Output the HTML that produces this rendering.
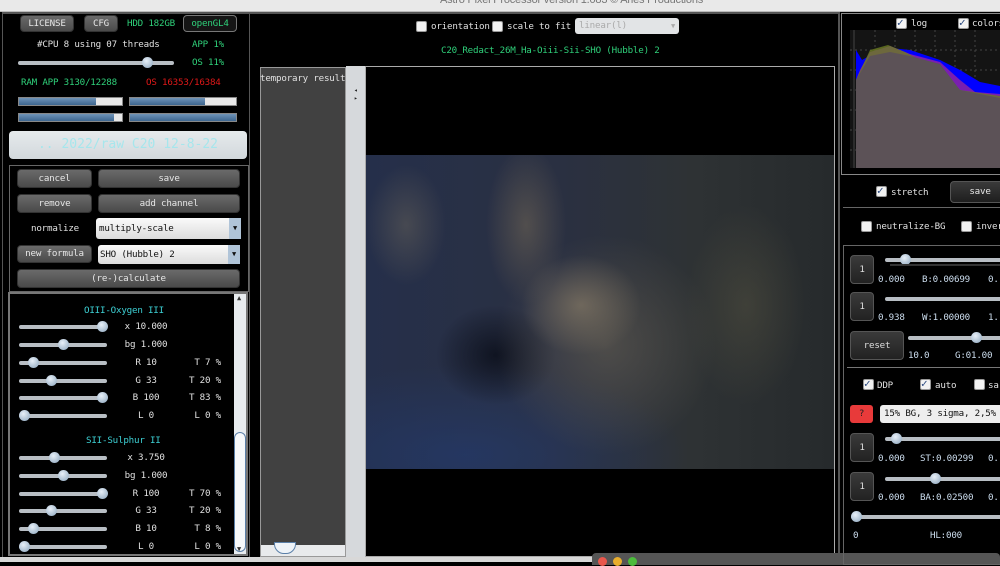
<!DOCTYPE html>
<html><head><meta charset="utf-8"><style>
*{margin:0;padding:0;box-sizing:border-box}
body{width:1000px;height:562px;background:#000;position:relative;overflow:hidden;font-family:"DejaVu Sans Mono","Liberation Mono",monospace;font-size:9.2px;letter-spacing:-0.2px;color:#ddd}
.a{position:absolute;white-space:nowrap}
.btn{position:absolute;background:linear-gradient(#6a6a6a,#4a4a4a);border-radius:4px;color:#e6e6e6;text-align:center;border:1px solid #333}
.g{color:#2fd07a}
.sl{position:absolute;height:4px;background:#b8bec4;border-radius:2px}
.kn{position:absolute;width:11px;height:11px;border-radius:50%;background:radial-gradient(circle at 40% 35%,#e8f0f8,#8aa4bc);top:-4px}
.bar{position:absolute;height:9px;background:#e8e8e8;border:1px solid #888}
.bar i{display:block;height:100%;background:linear-gradient(#6f93b8,#3d6690)}
.cb{position:absolute;width:11px;height:11px;background:#f2f2f2;border-radius:2px;border:1px solid #999}
.ck::after{content:"✓";position:absolute;left:0;top:-3px;font-size:11px;color:#2b4a80;font-weight:bold}
.t{color:#e0e0e0}
.one{position:absolute;width:24px;height:29px;background:linear-gradient(#3a3a3a,#222);border:1px solid #555;border-radius:4px;color:#ddd;text-align:center;line-height:27px}
</style></head><body>
<div class="a" style="left:0;top:0;width:1000px;height:12px;background:#e9e9e9;border-bottom:1px solid #bbb"></div>
<div class="a" style="left:440px;top:-6px;color:#777;font-family:'Liberation Sans',sans-serif;font-size:11px">Astro Pixel Processor version 1.083 © Aries Productions</div>
<div class="a" style="left:2px;top:12px;width:836px;height:2px;background:#555"></div>
<div class="a" style="left:2px;top:14px;width:248px;height:548px;border-left:1px solid #555;border-right:1px solid #555"></div>
<div class="btn" style="left:20px;top:15px;width:54px;height:17px;line-height:15px">LICENSE</div>
<div class="btn" style="left:84px;top:15px;width:34px;height:17px;line-height:15px">CFG</div>
<div class="a g" style="left:127px;top:18px">HDD 182GB</div>
<div class="btn" style="left:183px;top:15px;width:54px;height:17px;line-height:15px;background:#151515;border:1px solid #777;color:#2fd07a">openGL4</div>
<div class="a t" style="left:37px;top:39px">#CPU 8  using 07 threads</div>
<div class="a g" style="left:192px;top:39px">APP 1%</div>
<div class="sl" style="left:18px;top:61px;width:156px"><div class="kn" style="left:124px"></div></div>
<div class="a g" style="left:192px;top:57px">OS 11%</div>
<div class="a g" style="left:21px;top:77px">RAM  APP 3130/12288</div>
<div class="a" style="left:146px;top:77px;color:#e01818">OS 16353/16384</div>
<div class="bar" style="left:18px;top:97px;width:105px"><i style="width:75%"></i></div>
<div class="bar" style="left:129px;top:97px;width:108px"><i style="width:71%"></i></div>
<div class="bar" style="left:18px;top:113px;width:105px"><i style="width:92%"></i></div>
<div class="bar" style="left:129px;top:113px;width:108px"><i style="width:100%"></i></div>
<div class="a" style="left:9px;top:131px;width:238px;height:28px;background:linear-gradient(#e6eaec,#d2d8dc);border-radius:4px;color:#a6e6ec;font-size:13px;letter-spacing:0;text-align:center;line-height:28px">.. 2022/raw C20 12-8-22</div>
<div class="a" style="left:9px;top:165px;width:240px;height:127px;border:1px solid #666"></div>
<div class="btn" style="left:17px;top:169px;width:75px;height:19px;line-height:17px">cancel</div>
<div class="btn" style="left:98px;top:169px;width:142px;height:19px;line-height:17px">save</div>
<div class="btn" style="left:17px;top:194px;width:75px;height:19px;line-height:17px">remove</div>
<div class="btn" style="left:98px;top:194px;width:142px;height:19px;line-height:17px">add channel</div>
<div class="a t" style="left:31px;top:223px">normalize</div>
<div class="a" style="left:96px;top:218px;width:145px;height:21px;background:linear-gradient(#fafafa,#dcdcdc);border-radius:3px;color:#111;line-height:21px;padding-left:3px">multiply-scale<span style="position:absolute;right:0;top:0;width:12px;height:21px;background:#b0c4d8;text-align:center;font-size:7px">▼</span></div>
<div class="btn" style="left:17px;top:245px;width:75px;height:18px;line-height:16px">new formula</div>
<div class="a" style="left:98px;top:245px;width:142px;height:19px;background:linear-gradient(#fafafa,#dcdcdc);border-radius:3px;color:#111;line-height:19px;padding-left:2px">SHO (Hubble) 2<span style="position:absolute;right:0;top:0;width:12px;height:19px;background:#b0c4d8;text-align:center;font-size:7px">▼</span></div>
<div class="btn" style="left:17px;top:269px;width:223px;height:19px;line-height:17px">(re-)calculate</div>
<div class="a" style="left:8px;top:292px;width:240px;height:264px;border:2px solid #777"></div>
<div class="a" style="left:234px;top:294px;width:12px;height:260px;background:#e8ecef"></div>
<div class="a" style="left:234px;top:432px;width:12px;height:120px;border:1px solid #5a7fa8;border-radius:6px;background:#f6f8fa"></div>
<div class="a" style="left:237px;top:294px;font-size:7px;color:#333">▲</div>
<div class="a" style="left:237px;top:545px;font-size:7px;color:#333">▼</div>
<div class="a" style="left:84px;top:305px;color:#3dd0d4">OIII-Oxygen III</div>
<div class="a" style="left:86px;top:435px;color:#3dd0d4">SII-Sulphur II</div>
<div id="rows"></div>
<div class="cb" style="left:416px;top:21px"></div><div class="a t" style="left:431px;top:21px">orientation</div>
<div class="cb" style="left:492px;top:21px"></div><div class="a t" style="left:507px;top:21px">scale to fit</div>
<div class="a" style="left:575px;top:18px;width:104px;height:16px;background:#e2e4e6;border-radius:3px;color:#aaa;line-height:16px;padding-left:4px">linear(l)<span style="position:absolute;right:4px;font-size:7px">▼</span></div>
<div class="a g" style="left:441px;top:45px">C20_Redact_26M_Ha-Oiii-Sii-SHO (Hubble) 2</div>
<div class="a" style="left:260px;top:67px;width:86px;height:490px;background:#414141;border:1px solid #999"></div>
<div class="a t" style="left:260px;top:73px">temporary result</div>
<div class="a" style="left:261px;top:545px;width:84px;height:11px;background:#e8eaec"></div>
<div class="a" style="left:274px;top:542px;width:22px;height:12px;border:1px solid #5a7fa8;border-radius:0 0 10px 10px;background:#eef3f8"></div>
<div class="a" style="left:346px;top:66px;width:19px;height:492px;background:#d6d9dc"></div>
<div class="a" style="left:354px;top:87px;font-size:6px;color:#222;line-height:8px">◂<br>▸</div>
<div class="a" style="left:365px;top:66px;width:470px;height:491px;background:#000;border:1px solid #aaa"></div>
<div class="a" style="left:366px;top:155px;width:468px;height:314px;background:
radial-gradient(ellipse 60px 50px at 215px 150px,rgba(150,135,110,.55),transparent),
radial-gradient(ellipse 110px 110px at 240px 190px,rgba(120,110,90,.45),transparent),
radial-gradient(ellipse 40px 80px at 160px 70px,rgba(130,115,90,.45),transparent),
radial-gradient(ellipse 40px 60px at 40px 70px,rgba(120,112,95,.4),transparent),
radial-gradient(ellipse 60px 50px at 130px 200px,rgba(5,8,18,.7),transparent),
radial-gradient(ellipse 60px 100px at 380px 150px,rgba(100,95,70,.35),transparent),
radial-gradient(ellipse 220px 90px at 100px 300px,rgba(35,60,115,.6),transparent),
linear-gradient(90deg,#252f4a,#2a3042 40%,#2e3234 70%,#262a2c)"></div>
<div class="a" style="left:592px;top:553px;width:408px;height:12px;background:#555;border-radius:4px 4px 0 0"></div>
<div class="a" style="left:598px;top:557px;width:9px;height:9px;border-radius:50%;background:#e9574c"></div>
<div class="a" style="left:613px;top:557px;width:9px;height:9px;border-radius:50%;background:#e9ae2c"></div>
<div class="a" style="left:628px;top:557px;width:9px;height:9px;border-radius:50%;background:#4cbc3c"></div>
<div class="a" style="left:0;top:557px;width:592px;height:5px;background:#d8d8d8"></div>
<div class="a" style="left:838px;top:12px;width:2px;height:550px;background:#555"></div>
<div class="a" style="left:841px;top:13px;width:170px;height:162px;border:1px solid #888"></div>
<div class="cb ck" style="left:896px;top:18px"></div><div class="a t" style="left:911px;top:18px">log</div>
<div class="cb ck" style="left:958px;top:18px"></div><div class="a t" style="left:972px;top:18px">colors</div>
<svg class="a" style="left:850px;top:30px" width="150" height="138">
<rect width="150" height="138" fill="#141414"/>
<g stroke="#444" stroke-dasharray="2,3"><line x1="0" y1="20" x2="150" y2="20"/><line x1="0" y1="40" x2="150" y2="40"/><line x1="0" y1="60" x2="150" y2="60"/><line x1="0" y1="80" x2="150" y2="80"/><line x1="0" y1="100" x2="150" y2="100"/><line x1="0" y1="120" x2="150" y2="120"/><line x1="25" y1="0" x2="25" y2="138"/><line x1="45" y1="0" x2="45" y2="138"/><line x1="65" y1="0" x2="65" y2="138"/><line x1="85" y1="0" x2="85" y2="138"/><line x1="105" y1="0" x2="105" y2="138"/><line x1="125" y1="0" x2="125" y2="138"/></g>
<path d="M6 138V2 8 20L12 30 30 20 40 18 60 20 90 30 110 40 130 52 150 56V138Z" fill="#0000ff"/>
<path d="M6 138V50L10 40 20 22 40 16 60 24 90 32 110 50 125 62 150 64V138Z" fill="#7a1fb0"/>
<path d="M6 138V50L20 20 38 15 55 22 70 30 90 36 110 60 150 66V138Z" fill="#6a7a20" opacity=".8"/>
<path d="M6 138V50L20 26 40 22 60 26 90 34 110 60 150 68V138Z" fill="#5c5257"/>
<line x1="4" y1="0" x2="4" y2="138" stroke="#444"/>
</svg>
<div class="cb ck" style="left:876px;top:186px"></div><div class="a t" style="left:891px;top:187px">stretch</div>
<div class="btn" style="left:950px;top:181px;width:60px;height:22px;line-height:20px;background:linear-gradient(#3a3a3a,#1e1e1e);border-color:#555">save</div>
<div class="a" style="left:843px;top:207px;width:157px;height:1px;background:#666"></div>
<div class="cb" style="left:861px;top:221px"></div><div class="a t" style="left:876px;top:221px">neutralize-BG</div>
<div class="cb" style="left:961px;top:221px"></div><div class="a t" style="left:976px;top:221px">inver</div>
<div class="a" style="left:843px;top:245px;width:160px;height:320px;border:1px solid #666"></div>
<div class="one" style="left:850px;top:255px">1</div>
<div class="sl" style="left:885px;top:258px;width:120px"><div class="kn" style="left:15px"></div></div>
<div class="a" style="left:890px;top:264px;width:115px;height:2px;background:#333"></div>
<div class="a" style="left:878px;top:274px;color:#cde">0.000</div><div class="a" style="left:922px;top:274px;color:#cde">B:0.00699</div><div class="a" style="left:988px;top:274px;color:#cde">0.</div>
<div class="one" style="left:850px;top:292px">1</div>
<div class="sl" style="left:885px;top:297px;width:120px"></div>
<div class="a" style="left:878px;top:312px;color:#cde">0.938</div><div class="a" style="left:922px;top:312px;color:#cde">W:1.00000</div><div class="a" style="left:988px;top:312px;color:#cde">1.</div>
<div class="one" style="left:850px;top:331px;width:54px">reset</div>
<div class="sl" style="left:908px;top:336px;width:100px"><div class="kn" style="left:63px"></div></div>
<div class="a" style="left:908px;top:350px;color:#cde">10.0</div><div class="a" style="left:955px;top:350px;color:#cde">G:01.00</div>
<div class="a" style="left:847px;top:367px;width:160px;height:1px;background:#777"></div>
<div class="cb ck" style="left:863px;top:379px"></div><div class="a t" style="left:877px;top:380px">DDP</div>
<div class="cb ck" style="left:920px;top:379px"></div><div class="a t" style="left:935px;top:380px">auto</div>
<div class="cb" style="left:974px;top:379px"></div><div class="a t" style="left:988px;top:380px">sa</div>
<div class="a" style="left:850px;top:405px;width:23px;height:18px;background:#e83a3a;border-radius:3px;text-align:center;line-height:18px;color:#222">?</div>
<div class="a" style="left:880px;top:405px;width:125px;height:18px;background:#eee;border-radius:3px;color:#111;line-height:18px;padding-left:4px">15% BG, 3 sigma, 2,5% b</div>
<div class="one" style="left:850px;top:433px">1</div>
<div class="sl" style="left:885px;top:437px;width:120px"><div class="kn" style="left:6px"></div></div>
<div class="a" style="left:878px;top:453px;color:#cde">0.000</div><div class="a" style="left:920px;top:453px;color:#cde">ST:0.00299</div><div class="a" style="left:988px;top:453px;color:#cde">0.</div>
<div class="one" style="left:850px;top:472px">1</div>
<div class="sl" style="left:885px;top:477px;width:120px"><div class="kn" style="left:45px"></div></div>
<div class="a" style="left:878px;top:492px;color:#cde">0.000</div><div class="a" style="left:920px;top:492px;color:#cde">BA:0.02500</div><div class="a" style="left:988px;top:492px;color:#cde">0.</div>
<div class="sl" style="left:851px;top:515px;width:155px"><div class="kn" style="left:0"></div></div>
<div class="a" style="left:853px;top:530px;color:#cde">0</div><div class="a" style="left:930px;top:530px;color:#cde">HL:000</div>
<script>
var r=[[327,78,"x 10.000",""],[345,39,"bg 1.000",""],[363,9,"R 10","T 7 %"],[381,27,"G 33","T 20 %"],[398,78,"B 100","T 83 %"],[416,0,"L 0","L 0 %"],
[458,30,"x 3.750",""],[476,39,"bg 1.000",""],[494,78,"R 100","T 70 %"],[511,27,"G 33","T 20 %"],[529,9,"B 10","T 8 %"],[547,0,"L 0","L 0 %"]];
var h="";r.forEach(function(a){h+='<div class="sl" style="left:19px;top:'+(a[0]-2)+'px;width:88px"><div class="kn" style="left:'+a[1]+'px"></div></div>'+
'<div class="a t" style="left:120px;top:'+(a[0]-6)+'px;width:52px;text-align:center">'+a[2]+'</div>'+
'<div class="a t" style="left:185px;top:'+(a[0]-6)+'px;width:36px;text-align:right">'+a[3]+'</div>';});
document.getElementById("rows").innerHTML=h;
</script>
</body></html>
